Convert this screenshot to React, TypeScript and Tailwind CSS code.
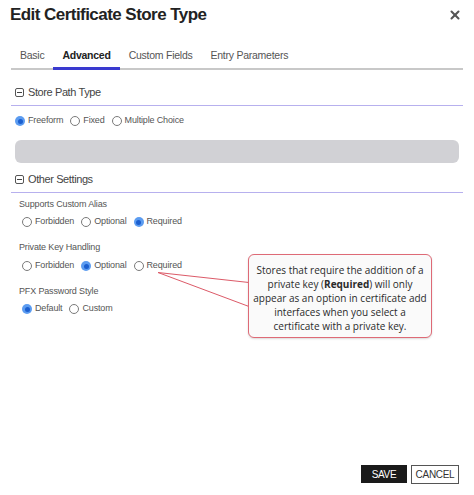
import { X } from 'lucide-react';

type Opt = { label: string; checked?: boolean };

function Radio({ label, checked }: Opt) {
  return (
    <label className="flex items-center gap-[3px]">
      {checked ? (
        <span className="w-[10px] h-[10px] rounded-full bg-[#5c9cf0] flex items-center justify-center">
          <span className="w-[5px] h-[5px] rounded-full bg-[#1b5fcf]" />
        </span>
      ) : (
        <span className="w-[10px] h-[10px] rounded-full border border-[#7a7a7a] bg-white" />
      )}
      <span>{label}</span>
    </label>
  );
}

function RadioRow({ options, className }: { options: Opt[]; className?: string }) {
  return (
    <div className={`flex items-center h-[12px] gap-[7px] text-[9px] tracking-[-0.15px] text-[#555] ${className ?? ''}`}>
      {options.map((o) => (
        <Radio key={o.label} {...o} />
      ))}
    </div>
  );
}

function SectionHeader({ title }: { title: string }) {
  return (
    <div className="flex items-center gap-[4px] h-[26px] border-b border-[#b7b0ee] px-[4px] text-[11px] tracking-[-0.4px] text-[#444]">
      <span className="w-[9px] h-[9px] rounded-[2px] border border-[#555] flex items-center justify-center">
        <span className="w-[5px] h-[1px] bg-[#444]" />
      </span>
      <span>{title}</span>
    </div>
  );
}

export default function App() {
  const tabs = ['Basic', 'Advanced', 'Custom Fields', 'Entry Parameters'];

  return (
    <div className="relative w-[474px] h-[495px] bg-white overflow-hidden font-[Liberation_Sans,Arial,sans-serif]">
      <div className="px-[11px]">
        {/* header */}
        <div className="flex items-center justify-between h-[30px]">
          <h1 className="text-[17px] font-bold text-[#222] tracking-[-0.55px] -ml-[1px]">Edit Certificate Store Type</h1>
          <X size={14} strokeWidth={3.5} className="text-[#555] mr-[1px]" />
        </div>

        {/* tabs */}
        <div className="mt-[14px] flex h-[26px] border-b-2 border-[#c8c8c8] text-[10.5px] tracking-[-0.25px]">
          {tabs.map((t) => (
            <div
              key={t}
              className={
                t === 'Advanced'
                  ? 'px-[9px] -mb-[2px] border-b-[3px] border-[#3a3acf] font-bold text-[#222] flex items-center'
                  : 'px-[9px] text-[#555] flex items-center'
              }
            >
              {t}
            </div>
          ))}
        </div>

        {/* store path type */}
        <div className="mt-[10px]">
          <SectionHeader title="Store Path Type" />
          <RadioRow
            className="mt-[9px] px-[4px]"
            options={[{ label: 'Freeform', checked: true }, { label: 'Fixed' }, { label: 'Multiple Choice' }]}
          />
          <div className="mt-[13px] mx-[4px] h-[23px] rounded-[6px] bg-[#d1d1d5]" />
        </div>

        {/* other settings */}
        <div className="mt-[4px]">
          <SectionHeader title="Other Settings" />
          <div className="px-[8px] pt-[5px] text-[9px] tracking-[-0.15px] text-[#555]">
            <div className="h-[14px] flex items-center">Supports Custom Alias</div>
            <RadioRow
              className="mt-[4px] px-[3px]"
              options={[{ label: 'Forbidden' }, { label: 'Optional' }, { label: 'Required', checked: true }]}
            />
            <div className="mt-[13px] h-[14px] flex items-center">Private Key Handling</div>
            <RadioRow
              className="mt-[5px] px-[3px]"
              options={[{ label: 'Forbidden' }, { label: 'Optional', checked: true }, { label: 'Required' }]}
            />
            <div className="mt-[13px] h-[14px] flex items-center">PFX Password Style</div>
            <RadioRow
              className="mt-[4px] px-[3px]"
              options={[{ label: 'Default', checked: true }, { label: 'Custom' }]}
            />
          </div>
        </div>
      </div>

      {/* footer buttons */}
      <div className="absolute right-[15px] top-[465px] flex gap-[4px] text-[10px] tracking-[-0.3px]">
        <button className="w-[46px] h-[18px] bg-[#1a1a1a] text-white">SAVE</button>
        <button className="w-[48px] h-[19px] bg-white border border-[#555] text-[#333]">CANCEL</button>
      </div>

      {/* callout pointer */}
      <svg className="absolute left-0 top-0 pointer-events-none" width="474" height="495">
        <line x1="158" y1="272.5" x2="249" y2="282.5" stroke="#dc5a68" strokeWidth="1" />
        <line x1="158" y1="272.5" x2="249" y2="306.5" stroke="#dc5a68" strokeWidth="1" />
      </svg>

      {/* callout */}
      <div className="absolute left-[248px] top-[254px] w-[184px] h-[84px] rounded-[6px] border-[1.5px] border-[#de6a76] bg-[#fafafa] shadow-[0_1px_2px_rgba(0,0,0,0.15)] flex items-center justify-center pt-[4px] text-center font-['Open_Sans',sans-serif] text-[10px] leading-[14px] text-[#2a2a2a] whitespace-nowrap">
        <p>
          Stores that require the addition of a
          <br />
          private key (<b>Required</b>) will only
          <br />
          appear as an option in certificate add
          <br />
          interfaces when you select a
          <br />
          certificate with a private key.
        </p>
      </div>
    </div>
  );
}
